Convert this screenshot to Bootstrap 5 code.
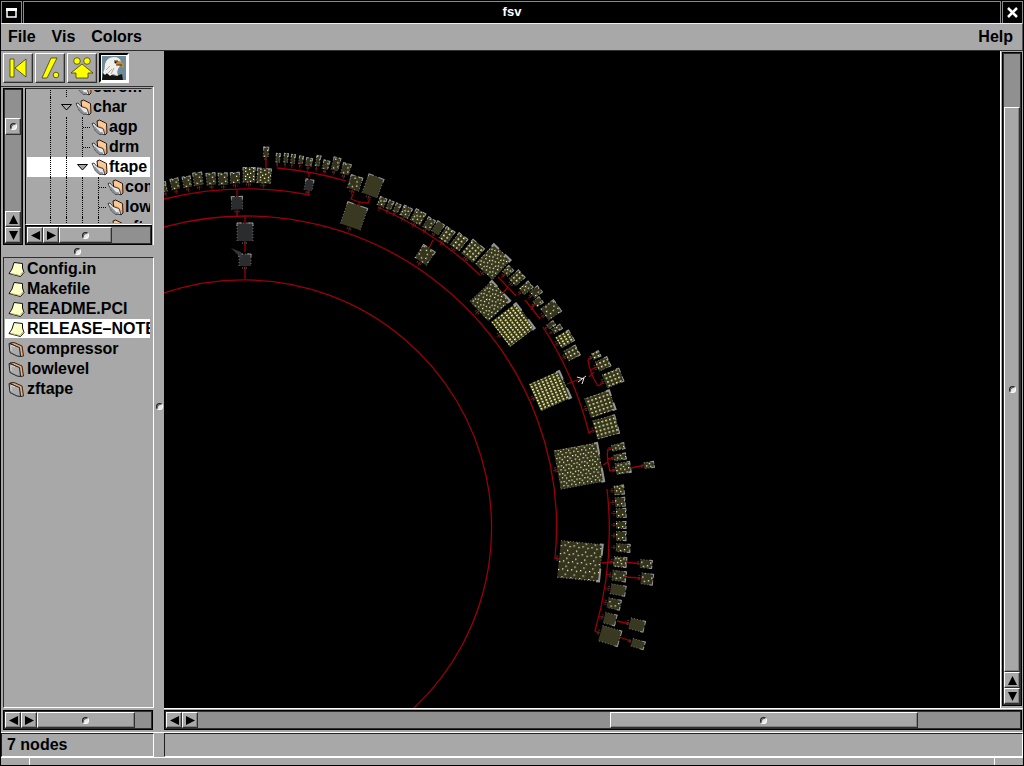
<!DOCTYPE html>
<html lang="en">
<head>
<meta charset="utf-8">
<meta name="viewport" content="width=device-width, initial-scale=1">
<title>fsv</title>
<link rel="stylesheet" href="https://cdn.jsdelivr.net/npm/bootstrap@5.3.0/dist/css/bootstrap.min.css">
<style>
:root { --face:#a8a8a8; --trough:#909090; --dark:#585858; }
body { font:bold 16px/20px "Liberation Sans", Arial, sans-serif; color:#000; background:#000; }
button, a { color:#000; font:inherit; text-decoration:none; }
button { border-radius:0; padding:0; }
svg { display:block; flex:none; }
.fit { min-height:0; min-width:0; }
/* window frame */
.titlebar { height:23px; padding:1px 1px 0 1px; gap:1px; }
.titlebar button, .titlebar h1 { border:1px solid #8a8a8a; border-width:1px 1px 0 1px; background:#000; color:#fff; margin:0; }
.titlebar button { width:21px; display:flex; align-items:center; justify-content:center; }
.titlebar h1 { font-size:13px; line-height:20px; font-weight:bold; }
.window { background:var(--face); margin:0 1px 1px; min-height:0; }
.menubar { height:28px; padding:0 9px 0 7px; gap:16px; border-top:1px solid #ececec; border-bottom:1px solid #303030; border-right:1px solid var(--dark); }
/* bevels */
.raised { background:var(--face); border:1px solid; border-color:#fff #303030 #303030 #fff; box-shadow:inset -1px -1px #808080; }
.sunken { border:1px solid; border-color:#202020 #fff #fff #202020; }
.sidebar { width:153px; flex:none; }
.toolbar-icons { padding:2px 2px 3px; gap:2px; }
.toolbar-icons button { width:30px; height:30px; display:flex; align-items:center; justify-content:center; }
.toolbar-icons .pressed { background:#fff; border:2px solid; border-color:#000 #fff #fff #000; }
.sash { width:10px; flex:none; display:flex; align-items:center; justify-content:center; padding-top:30px; }
.sash-row { height:12px; display:flex; align-items:center; justify-content:center; }
.grip { width:7px; height:7px; border-radius:50%; background:#e8e8e8; border:1px solid #fff; border-top-color:#202020; border-left-color:#202020; box-shadow:inset 1px 1px #606060; }
/* scroll bars */
.sbar { background:var(--trough); border:1px solid; border-color:#000; box-shadow:inset 1px 1px #303030, inset -1px -1px #303030; display:flex; padding:1px; }
.sbar.hor { height:20px; }
.sbar.ver { width:20px; flex-direction:column; }
.sbar button { width:16px; height:16px; flex:none; display:flex; align-items:center; justify-content:center; }
.thumb { display:flex; align-items:center; justify-content:center; }
.w-tree { width:43%; } .w-files { width:67%; } .w-view { width:36%; margin-left:auto; margin-right:12%; } .h-view { margin-top:53px; }
.files-bar { margin:2px 1px 2px 2px; }
.view-v { padding:1px 1px 2px 1px; border-left:1px solid #fff; }
.view-h { border-top:1px solid #fff; padding:1px 1px 2px 0; }
/* tree */
.tree-pane { height:159px; border-top:1px solid #303030; border-right:1px solid #fff; padding:1px 1px 0 2px; gap:2px; }
.tree { height:137px; border:1px solid; border-color:#303030 #a8a8a8 #fff #000; padding:1px 1px 1px 1px; }
.tree-clip { height:100%; overflow:hidden; }
.tree ul { margin:-13px 0 0; }
.tree li { height:20px; display:flex; align-items:center; white-space:nowrap; }
.tree li.picked { background:#fff; }
.guide { width:16px; height:20px; flex:none; border-left:1px dotted #000; }
.branch { background:repeating-linear-gradient(90deg,#000 0 1px,transparent 1px 2px) 0 10px / 8px 1px no-repeat; }
.lead-gap { width:23px; flex:none; }
.expander { margin-left:-5px; margin-right:10px; }
.folder { margin-left:-7px; }
.tree a { margin-left:1px; }
.files { margin:0 0 0 2px; border:1px solid; border-color:#303030 #fff #fff #303030; padding:1px 3px 0 1px; }
.files ul { overflow:hidden; }
.files li { height:20px; padding-left:3px; white-space:nowrap; }
.files li.picked { background:linear-gradient(#fff 19px,#a8a8a8 19px); }
.files a { gap:2px; }
.canvas { background:#000; overflow:hidden; }
.statusrow { height:25px; border-top:1px solid #fff; gap:10px; }
.status-l { width:153px; padding-left:5px; line-height:21px; }
.frame-foot { height:8px; border-top:1px solid #fff; justify-content:space-between; }
.frame-foot span { width:29px; }
.frame-foot .fl { border-right:1px solid #fff; }
.frame-foot .fr { border-left:1px solid #fff; }
</style>
</head>
<body class="vh-100 d-flex flex-column overflow-hidden">

<svg width="0" height="0" class="position-absolute" aria-hidden="true">
  <symbol id="i-open" viewBox="0 0 17 17">
    <path d="M6 2 8.500 1 15.500 4.500 16 14 14 16 7 11z" fill="#e9a774" stroke="#2a1a10"/>
    <path d="M7 3 9 2 15 5 14.500 11 11 8 7 6z" fill="#ffc995"/>
    <path d="M1 4.500 3 4 6 7.500 12 9.500 14 15.500 8.500 15.500 4.500 12z" fill="#e4e8ea" stroke="#222" stroke-width=".8"/>
    <path d="M3 8 8.500 14 12 14.500" fill="none" stroke="#8a9094" stroke-width="2"/>
  </symbol>
  <symbol id="i-shut" viewBox="0 0 17 17">
    <path d="M2 2 6 1.500 14 5 15.500 15 12.500 15.500 11 7z" fill="#e0ad83" stroke="#3a2010"/>
    <path d="M1 2.500 11.500 6.500 12.500 15.500 9 15 2 11.500z" fill="#a9abad" stroke="#222"/>
    <path d="M2.500 4 7 6M3 5 3 10" stroke="#d8dadc" fill="none"/>
  </symbol>
  <symbol id="i-doc" viewBox="0 0 17 17">
    <path d="M6 1.500 14.500 2.500 14.500 7 16 11.500 12.500 15.500 1 12.500 4 8z" fill="#ffffc8" stroke="#111"/>
    <path d="M3 12.500 12 14.500 14.800 11" fill="none" stroke="#b8b878"/>
  </symbol>
  <symbol id="a-l" viewBox="0 0 9 9"><path d="M9 0V9L0 4.500z"/></symbol>
  <symbol id="a-r" viewBox="0 0 9 9"><path d="M0 0V9L9 4.500z"/></symbol>
  <symbol id="a-u" viewBox="0 0 9 9"><path d="M0 9H9L4.500 0z"/></symbol>
  <symbol id="a-d" viewBox="0 0 9 9"><path d="M0 0H9L4.500 9z"/></symbol>
  <symbol id="i-exp" viewBox="0 0 11 7"><path d="M.5 .5H10.500L5.500 6z" fill="#a8a8a8" stroke="#000"/></symbol>
</svg>

<header class="titlebar d-flex">
  <button type="button" aria-label="Window menu"><svg width="11" height="10"><path d="M1 2H10V9H1z" fill="none" stroke="#fff" stroke-width="1.500"/><path d="M0 0H11V3H0z" fill="#fff"/></svg></button>
  <h1 class="flex-grow-1 text-center">fsv</h1>
  <button type="button" aria-label="Close"><svg width="11" height="11"><path d="M1 1 10 10M10 1 1 10" stroke="#fff" stroke-width="2.500"/></svg></button>
</header>

<div class="window flex-grow-1 d-flex flex-column">
  <nav class="menubar d-flex align-items-center">
    <a href="#">File</a><a href="#">Vis</a><a href="#">Colors</a><a href="#" class="ms-auto">Help</a>
  </nav>

  <main class="d-flex flex-grow-1 fit">
    <aside class="sidebar d-flex flex-column">
      <div class="toolbar-icons d-flex">
        <button type="button" class="raised" aria-label="Root"><svg width="22" height="22"><g stroke="#404000" stroke-width=".8" fill="#ff0"><path d="M3 2H7V20H3z"/><path d="M19 2V20L8 11z"/></g></svg></button>
        <button type="button" class="raised" aria-label="Back"><svg width="22" height="22"><g stroke="#404000" stroke-width=".8" fill="#ff0"><path d="M12 1H18L8 21H3z"/><circle cx="17" cy="18" r="2.800"/></g></svg></button>
        <button type="button" class="raised" aria-label="Up"><svg width="24" height="24"><g stroke="#404000" stroke-width=".8" fill="#ff0"><circle cx="7" cy="5" r="3.300"/><circle cx="17" cy="5" r="3.300"/><path d="M12 8 23 17H18V22H6V17H1z"/></g></svg></button>
        <button type="button" class="pressed" aria-label="Bird's-eye view" aria-pressed="true"><svg width="24" height="24" viewBox="0 0 24 24"><path d="M0 0H24V24H0z" fill="#6e8b9c"/><path d="M0 24 1 16 6 18 14 20 20 18 21 24z" fill="#15130f"/><path d="M1 17Q3 13 3 8Q5 1 12 1Q18 1 19 6L18 10Q14 14 16 20L11 18 8 20 5 17 3 19z" fill="#f0eee6"/><path d="M4 14 8 10M5 18 10 13M9 18 12 12" stroke="#aaa" fill="none"/><path d="M13 5Q17 4 21 7Q23 9 21 12Q19 9 15 9z" fill="#c58a2c"/><path d="M12 5H16M14 9H20" stroke="#3a2a18"/><circle cx="13.500" cy="6.500" r="1"/></svg></button>
      </div>

      <section class="tree-pane d-flex">
        <div class="sbar ver">
          <div class="flex-grow-1 d-flex flex-column pt-1"><div class="raised thumb mt-4 py-1"><span class="grip"></span></div></div>
          <button type="button" class="raised" aria-label="Scroll up"><svg width="9" height="9"><use href="#a-u"/></svg></button>
          <button type="button" class="raised" aria-label="Scroll down"><svg width="9" height="9"><use href="#a-d"/></svg></button>
        </div>
        <div class="flex-grow-1 d-flex flex-column fit">
          <div class="tree"><div class="tree-clip"><ul class="list-unstyled" id="tree"></ul></div></div>
          <div class="sbar hor mt-auto">
            <button type="button" class="raised" aria-label="Scroll left"><svg width="9" height="9"><use href="#a-l"/></svg></button>
            <button type="button" class="raised" aria-label="Scroll right"><svg width="9" height="9"><use href="#a-r"/></svg></button>
            <div class="raised thumb w-tree"><span class="grip"></span></div>
          </div>
        </div>
      </section>

      <div class="sash-row"><span class="grip"></span></div>

      <div class="files flex-grow-1 fit">
        <ul class="list-unstyled m-0" id="files"></ul>
      </div>
      <div class="sbar hor files-bar">
        <button type="button" class="raised" aria-label="Scroll left"><svg width="9" height="9"><use href="#a-l"/></svg></button>
        <button type="button" class="raised" aria-label="Scroll right"><svg width="9" height="9"><use href="#a-r"/></svg></button>
        <div class="raised thumb w-files"><span class="grip"></span></div>
      </div>
    </aside>

    <div class="sash"><span class="grip"></span></div>

    <section class="flex-grow-1 d-flex flex-column fit">
      <div class="d-flex flex-grow-1 fit">
        <div class="canvas flex-grow-1 fit">
          <svg id="view" width="100%" height="100%" viewBox="164 51 836 657" preserveAspectRatio="xMinYMin slice" role="img" aria-label="Directory tree map">
            <defs>
              <pattern id="p1" width="9" height="8" patternUnits="userSpaceOnUse"><path d="M0 0H9V8H0z" fill="#33331f"/><path d="M1 1h1.300v1.300h-1.300zM6 2h1.300v1.300h-1.300zM4 6h1.300v1.300h-1.300z" fill="#ffffb0"/></pattern>
              <pattern id="p2" width="8" height="8" patternUnits="userSpaceOnUse"><path d="M0 0H8V8H0z" fill="#36361f"/><path d="M1 1h1.300v1.300h-1.300zM5 0h1.300v1.300h-1.300zM3 4h1.300v1.300h-1.300zM6 4h1.300v1.300h-1.300zM0 6h1.300v1.300h-1.300z" fill="#ffffc0"/></pattern>
              <pattern id="p3" width="4" height="4" patternUnits="userSpaceOnUse"><path d="M0 0H4V4H0z" fill="#35351c"/><path d="M1 1h1.600v1.600h-1.600z" fill="#ffffc0"/></pattern>
              <pattern id="p4" width="4" height="3" patternUnits="userSpaceOnUse"><path d="M0 0H4V3H0z" fill="#35351c"/><path d="M0 0h2v1.500h-2z" fill="#ffffa0"/></pattern>
            </defs>
            <g id="arcs" fill="none" stroke="#98000c" stroke-width="1.300">
              <path d="M164 293A248 248 0 0 1 413 709"/>
              <path d="M164 227A311 311 0 0 1 555 558L559 559"/>
              <path d="M164 199A338 338 0 0 1 310 195M277 168A360 360 0 0 1 346 181M380 208A346 346 0 0 1 480 275M498 277A345 345 0 0 1 516 296M525 300A355 355 0 0 1 540 319M543 327A359 359 0 0 1 589 433L592 431M607 489A365 365 0 0 1 595 631L599 633"/>
              <path d="M245 279V268M245 252V241M245 224V216M237 212V216M237 196V190M266 157V169M309 173V177M309 190V194M353 194L351 199Q360 203 368 203L370 199M359 202V207M429 248 433 240M502 294 508 287M531 310 535 303M567 384 583 378M589 377 594 372M588 360Q590 374 598 386M588 360 593 357M591 370 597 367M598 386 603 383M603 465 608 462M608 449Q606 456 610 471M608 450 613 448M608 459 614 458M609 471 616 470M631 468 645 465M602 563 613 562M626 562 641 564M626 577 640 578M617 621 630 624M619 637 631 641"/>
            </g>
            <g id="blocks"></g>
            <path d="M231 248 241 252 243 260 237 254z" fill="#34363a"/>
            <path d="M577 377 584 379M578 382 586 376M582 384 584 378" stroke="#e8e8e8" fill="none"/>
          </svg>
        </div>
        <div class="d-flex view-v">
          <div class="sbar ver">
            <div class="raised thumb flex-grow-1 h-view"><span class="grip"></span></div>
            <button type="button" class="raised" aria-label="Scroll up"><svg width="9" height="9"><use href="#a-u"/></svg></button>
            <button type="button" class="raised" aria-label="Scroll down"><svg width="9" height="9"><use href="#a-d"/></svg></button>
          </div>
        </div>
      </div>
      <div class="view-h">
        <div class="sbar hor">
          <button type="button" class="raised" aria-label="Scroll left"><svg width="9" height="9"><use href="#a-l"/></svg></button>
          <button type="button" class="raised" aria-label="Scroll right"><svg width="9" height="9"><use href="#a-r"/></svg></button>
          <div class="raised thumb w-view"><span class="grip"></span></div>
        </div>
      </div>
    </section>
  </main>

  <footer>
    <div class="statusrow d-flex">
      <div class="sunken status-l">7 nodes</div>
      <div class="sunken flex-grow-1"></div>
    </div>
    <div class="frame-foot d-flex"><span class="fl"></span><span class="fr"></span></div>
  </footer>
</div>

<script src="https://cdn.jsdelivr.net/npm/bootstrap@5.3.0/dist/js/bootstrap.bundle.min.js"></script>
<script>
// Directory tree: [depth, name, expanded, picked]
const dirs = [[2,'cdrom',0,0],[2,'char',1,0],[3,'agp',0,0],[3,'drm',0,0],[3,'ftape',1,1],[4,'compressor',0,0],[4,'lowlevel',0,0],[4,'zftape',0,0]];
document.getElementById('tree').innerHTML = dirs.map(([d, name, open, picked]) => {
  const guides = '<span class="guide"></span>'.repeat(d - 1);
  // an expander straddles the guide line of its own level
  const node = open
    ? '<svg class="expander" width="11" height="7"><use href="#i-exp"/></svg>'
    : '<span class="guide branch"></span>';
  return `<li class="${picked ? 'picked' : ''}"><span class="lead-gap"></span>${guides}${node}<svg class="folder" width="17" height="17"><use href="#i-open"/></svg><a href="#">${name}</a></li>`;
}).join('');

const files = [['Config.in','doc'],['Makefile','doc'],['README.PCI','doc'],['RELEASE–NOTES','doc'],['compressor','shut'],['lowlevel','shut'],['zftape','shut']];
document.getElementById('files').innerHTML = files.map(([n, k]) =>
  `<li class="${n[2] === 'L' ? 'picked' : ''}"><a href="#" class="d-flex align-items-center"><svg width="17" height="17"><use href="#i-${k}"/></svg>${n}</a></li>`).join('');

// Directory blocks: [x, y, breadth, depth, density of file dots]
const blocks = [
[164,187,5,10,1],[175,184,8,11,1],[187,182,8,11,1],[198,179,9,13,1],[211,179,9,12,1],[223,179,9,12,1],[235,178,9,11,1],[249,175,12,15,2],[264,176,14,15,2],[266,152,5,10,1],
[278,158,4,9,1],[286,158,4,9,1],[293,159,4,9,1],[301,160,4,8,1],[309,162,6,8,1],[318,161,4,11,1],[326,165,6,9,1],[336,164,7,13,1],[346,169,8,11,1],[309,185,8,11,0],
[237,203,11,13,0],[245,232,16,18,0],[245,260,12,12,0],
[355,183,12,14,1],[373,186,16,20,5],[354,216,21,23,5],[382,202,7,9,2],[390,205,5,9,1],[397,208,5,9,1],[406,212,9,11,2],[418,217,11,13,2],[429,224,8,12,1],[438,228,8,12,5],[447,235,10,14,3],[459,242,11,15,3],[473,251,15,18,3],[425,255,14,16,1],
[493,262,23,27,2],[508,271,7,9,2],[517,278,10,13,3],[526,288,8,12,2],[536,292,8,10,1],[538,302,7,8,1],[551,310,14,16,1],[490,301,27,30,2],[513,325,31,31,4],
[551,325,5,8,1],[557,329,5,10,2],[565,339,12,15,4],[572,353,11,13,3],[550,391,29,33,4],[596,355,6,8,3],[603,364,10,13,3],[613,378,14,18,3],[600,404,20,26,3],[606,427,19,23,3],
[579,466,39,44,2],[618,447,6,13,2],[620,457,6,12,2],[623,468,11,15,2],[649,465,6,10,2],[619,490,9,10,2],[620,502,9,10,1],[621,513,9,10,1],[621,525,7,10,1],[621,536,9,10,1],
[623,548,8,14,1],[580,561,37,42,1],[620,562,10,13,2],[646,564,8,12,1],[619,576,10,14,1],[647,579,11,12,1],[618,590,10,15,5],[614,604,10,13,1],[610,619,11,12,5],[637,625,11,15,5],[610,636,16,20,5],[638,644,8,13,5]];
const fills = { 0:'#2b2c2e', 1:'url(#p1)', 2:'url(#p2)', 3:'url(#p3)', 4:'url(#p4)', 5:'#393922' };
document.getElementById('blocks').innerHTML = blocks.map(([x, y, b, d, t]) => {
  const a = Math.atan2(y - 527, x - 245) * 180 / Math.PI;
  const w = d / 2, h = b / 2, edge = d > 25 ? 2 : 1, tag = Math.min(h * .5, 3);
  return `<g transform="translate(${x} ${y}) rotate(${a.toFixed(1)})">
    <path d="M${-w - 5} 0H${-w}" stroke="#80000c"/>
    <path d="M${-w - 2} ${-tag}V${tag}" stroke="#4a3638" stroke-width="2" stroke-dasharray="1 1"/>
    <rect x="${-w}" y="${-h}" width="${d}" height="${b}" fill="${fills[t]}"/>
    <path d="M${w - 3} ${-h}H${w}V${-h * .4}M${w} ${h * .3}V${h}H${w - 3}" stroke="#929292" stroke-width="${edge}" fill="none"/>
    <path d="M${-w} ${-h}H${w}V${h}H${-w}" stroke="#a0a0a0" stroke-width=".6" stroke-dasharray="1 2" fill="none"/></g>`;
}).join('');
</script>
</body>
</html>
